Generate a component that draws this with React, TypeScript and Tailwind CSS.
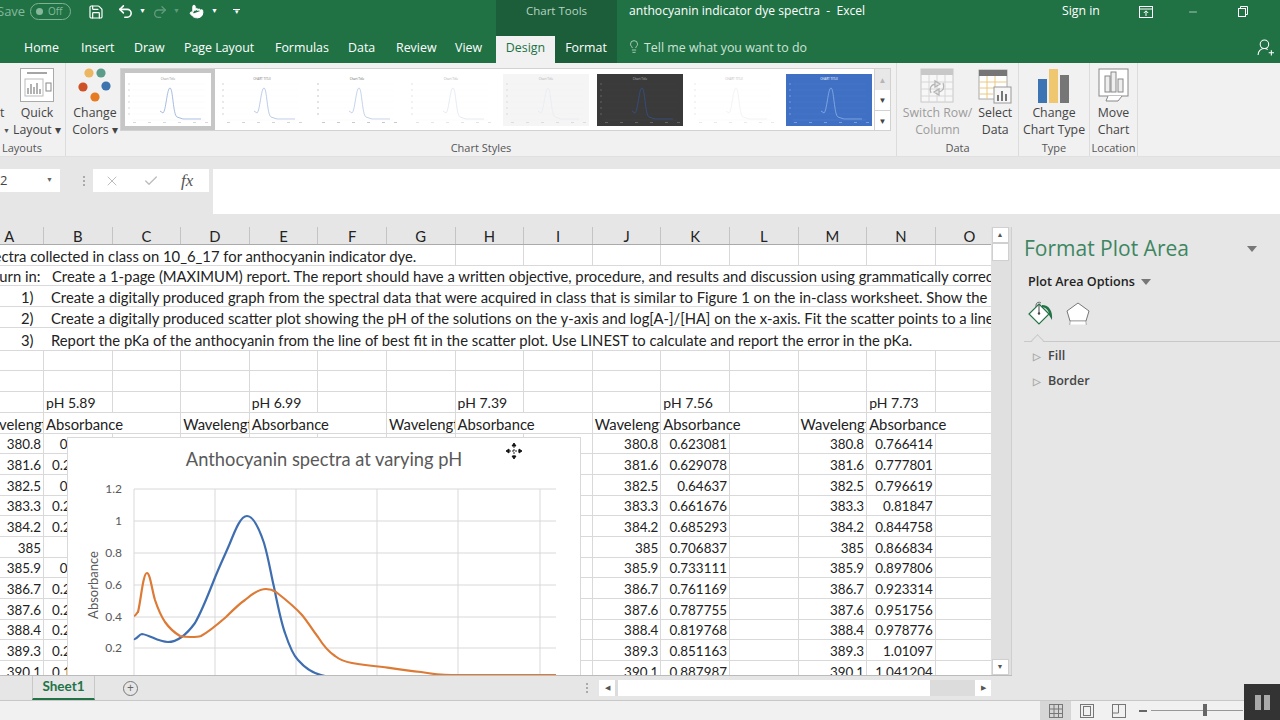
import { Save, Undo2, Redo2, Pointer, Lightbulb, Minus, X, Check } from "lucide-react";

const UI = "font-['Open_Sans',sans-serif]";
const CELL = "font-['Lato',sans-serif] text-[14.8px] text-[#222]";

const TABS = [
  { label: "Home", cls: "w-[70px] pl-[24px]" },
  { label: "Insert", cls: "w-[53px] pl-[11px]" },
  { label: "Draw", cls: "w-[50px] pl-[11px]" },
  { label: "Page Layout", cls: "w-[91px] pl-[11px]" },
  { label: "Formulas", cls: "w-[73px] pl-[11px]" },
  { label: "Data", cls: "w-[48px] pl-[11px]" },
  { label: "Review", cls: "w-[59px] pl-[11px]" },
  { label: "View", cls: "w-[52px] pl-[11px]" },
];

const WAVES = ["380.8", "381.6", "382.5", "383.3", "384.2", "385", "385.9", "386.7", "387.6", "388.4", "389.3", "390.1"];
const B_VALS = ["0.28105", "0.282917", "0.28573", "0.288104", "0.290716", "", "0.29611", "0.298461", "0.250121", "0.252703", "0.255169", "0.157318"];
const K_VALS = ["0.623081", "0.629078", "0.64637", "0.661676", "0.685293", "0.706837", "0.733111", "0.761169", "0.787755", "0.819768", "0.851163", "0.887987"];
const N_VALS = ["0.766414", "0.777801", "0.796619", "0.81847", "0.844758", "0.866834", "0.897806", "0.923314", "0.951756", "0.978776", "1.01097", "1.041204"];
const COLS = ["A", "B", "C", "D", "E", "F", "G", "H", "I", "J", "K", "L", "M", "N", "O"];
const PH = ["pH 5.89", "pH 6.99", "pH 7.39", "pH 7.56", "pH 7.73"];

const PEAK = "M35 37 L38 39 C41 37 42 14 45 14 C48 14 48 41 52 43 L58 45 L76 45";

function Thumb({ bg, line, grid, title, titleFill }: { bg: string; line: string; grid: string; title: string; titleFill: string }) {
  return (
    <svg viewBox="0 0 86 52" className="h-[52px] w-[86px] shrink-0">
      <rect width="86" height="52" fill={bg} />
      {[10, 16, 22, 28, 34, 40].map((y) => (
        <g key={y}>
          <line x1="7" x2="80" y1={y} y2={y} stroke={grid} strokeWidth="0.25" />
          <rect x="3" y={y - 0.4} width="2" height="0.8" fill={titleFill} opacity="0.4" />
        </g>
      ))}
      {[8, 23, 38, 53, 68, 80].map((x) => (
        <rect key={x} x={x} y="48" width="3" height="0.8" fill={titleFill} opacity="0.4" />
      ))}
      <text x="43" y="6" textAnchor="middle" fontSize="3" fill={titleFill}>
        {title}
      </text>
      <path d={PEAK} fill="none" stroke={line} strokeWidth="0.8" />
      <line x1="7" x2="80" y1="46" y2="46" stroke={grid} strokeWidth="0.4" />
    </svg>
  );
}

function GridIcon() {
  return (
    <svg viewBox="0 0 34 34" className="h-[34px] w-[34px]">
      <rect x="0.5" y="0.5" width="33" height="33" fill="#fff" stroke="#aaa" />
      <line x1="7" x2="27" y1="5" y2="5" stroke="#888" strokeWidth="1.5" />
      <rect x="5" y="11" width="18" height="17" fill="none" stroke="#bbb" />
      <path d="M8 26v-6M11 26v-10M14 26v-7M17 26v-11M20 26v-5" stroke="#999" strokeWidth="1.5" />
      <rect x="26" y="15" width="5" height="8" fill="none" stroke="#888" />
    </svg>
  );
}

function ColorsIcon() {
  return (
    <svg viewBox="0 0 34 34" className="h-[34px] w-[34px]">
      <circle cx="11" cy="5" r="4.6" fill="#edb761" />
      <circle cx="23" cy="5" r="4.6" fill="#5c9c8a" />
      <circle cx="5" cy="19" r="4.6" fill="#cf5227" />
      <circle cx="28" cy="18" r="4.6" fill="#3d74ad" />
      <circle cx="17" cy="29" r="4.6" fill="#e67b22" />
    </svg>
  );
}

function SwitchIcon() {
  return (
    <svg viewBox="0 0 34 36" className="h-[36px] w-[34px]">
      <rect x="1" y="1" width="32" height="33" fill="#f7f7f7" stroke="#c8c8c8" />
      <rect x="1" y="1" width="32" height="6" fill="#c8c8c8" />
      <path d="M1 14h32M1 21h32M1 28h32M9 7v27M17 7v27M25 7v27" stroke="#d6d6d6" />
      <path d="M11 25 C9 20 11 17 15 16 M15 13v6l5-3zM23 15c2 5 0 8-4 9M19 21v6l-5-3z" fill="none" stroke="#b5b5b5" strokeWidth="1.3" />
    </svg>
  );
}

function SelectDataIcon() {
  return (
    <svg viewBox="0 0 34 36" className="h-[36px] w-[34px]">
      <rect x="1" y="2" width="28" height="29" fill="#fff" stroke="#aaa" />
      <rect x="1" y="2" width="28" height="6" fill="#767676" />
      <path d="M1 14h28M1 20h28M1 26h14" stroke="#eac87f" />
      <path d="M9 8v23M17 8v23" stroke="#eac87f" />
      <rect x="16" y="19" width="17" height="16" fill="#f7f7f7" stroke="#999" />
      <path d="M20 33v-6M24 33v-10M28 33v-7" stroke="#777" strokeWidth="2" />
    </svg>
  );
}

function ChartTypeIcon() {
  return (
    <svg viewBox="0 0 34 36" className="h-[36px] w-[34px]">
      <rect x="1" y="11" width="9" height="24" fill="#3c74b4" />
      <rect x="12" y="1" width="9" height="34" fill="#efc76f" />
      <rect x="23" y="7" width="9" height="28" fill="#767676" />
    </svg>
  );
}

function MoveChartIcon() {
  return (
    <svg viewBox="0 0 32 36" className="h-[36px] w-[32px]">
      <rect x="1" y="1" width="29" height="27" fill="#fff" stroke="#888" />
      <rect x="7" y="8" width="5" height="16" fill="#eee" stroke="#888" />
      <rect x="13" y="4" width="5" height="20" fill="#eee" stroke="#888" />
      <rect x="20" y="11" width="5" height="13" fill="#eee" stroke="#888" />
      <path d="M10 28 L8 33 H20 L24 28" fill="#fff" stroke="#888" />
    </svg>
  );
}

function RibbonButton({ lines, muted, children }: { lines: string[]; muted?: boolean; children: React.ReactNode }) {
  return (
    <div className="flex flex-col items-center">
      <div className="flex h-[36px] items-start justify-center">{children}</div>
      <div className={`text-center text-[12.3px] leading-[17px] whitespace-nowrap ${muted ? "text-[#9c9c9c]" : "text-[#444]"}`}>
        {lines.map((l) => (
          <div key={l}>{l}</div>
        ))}
      </div>
    </div>
  );
}

function GroupLabel({ children }: { children: React.ReactNode }) {
  return <div className="absolute inset-x-0 bottom-0 text-center text-[11px] leading-[16px] text-[#555]">{children}</div>;
}

function TitleBar() {
  return (
    <div className="flex h-[36px] items-start bg-[#207245] text-white">
      <div className="flex h-[23px] w-[496px] shrink-0 items-center">
        <span className="ml-[-3px] w-[33px] text-[13px] text-[#85b89c]">Save</span>
        <div className="flex h-[17px] w-[41px] items-center gap-[5px] rounded-full border border-[#7fb196] pl-[5px] text-[10px] text-[#85b89c]">
          <span className="h-[7px] w-[7px] rounded-full bg-[#85b89c]" />
          <span>Off</span>
        </div>
        <Save className="ml-[17px] h-[16px] w-[16px]" strokeWidth={1.8} />
        <Undo2 className="ml-[13px] h-[17px] w-[17px]" strokeWidth={2.2} />
        <span className="ml-[5px] text-[7px]">▼</span>
        <Redo2 className="ml-[6px] h-[16px] w-[16px] text-[#619a7c]" strokeWidth={2} />
        <span className="ml-[5px] text-[7px] text-[#619a7c]">▼</span>
        <Pointer className="ml-[9px] h-[17px] w-[15px]" fill="#fff" strokeWidth={1.5} />
        <span className="ml-[7px] text-[7px]">▼</span>
        <span className="ml-[14px] flex w-[10px] flex-col items-center text-[6px] leading-[3px]">
          <span className="h-[1px] w-[7px] bg-white" />
          <span className="mt-[1px]">▼</span>
        </span>
      </div>
      <div className="flex h-full w-[121px] shrink-0 justify-center bg-[#1c5e39] pt-[2px] text-[11.5px] leading-[18px] text-[#b7d4c3]">Chart Tools</div>
      <div className="flex h-[23px] items-center">
        <span className="ml-[12px] w-[236px] shrink-0 whitespace-pre text-[12.1px]">anthocyanin indicator dye spectra  -  Excel</span>
        <span className="ml-[197px] w-[38px] shrink-0 text-[12.3px]">Sign in</span>
        <svg viewBox="0 0 16 14" className="ml-[38px] h-[14px] w-[16px]" fill="none" stroke="#fff">
          <rect x="1.5" y="1.5" width="13" height="11" />
          <path d="M1.5 4h13M8 11V6M5.8 8 8 5.8 10.2 8" />
        </svg>
        <Minus className="ml-[33px] h-[12px] w-[12px]" strokeWidth={1.2} />
        <svg viewBox="0 0 12 13" className="ml-[38px] h-[13px] w-[12px]" fill="none" stroke="#fff">
          <rect x="1.5" y="3.5" width="7" height="8" />
          <path d="M3.5 3.5v-2h7v8h-2" />
        </svg>
      </div>
    </div>
  );
}

function TabBar() {
  return (
    <div className="flex h-[27px] items-stretch bg-[#207245] text-[12.4px] leading-[18px] text-white">
      {TABS.map((t) => (
        <div key={t.label} className={`${t.cls} shrink-0 whitespace-nowrap pt-[3px]`}>
          {t.label}
        </div>
      ))}
      <div className="w-[59px] bg-[#f1f1f1] pt-[3px] text-center text-[#207245]">Design</div>
      <div className="w-[62px] bg-[#1c5e39] pt-[3px] text-center">Format</div>
      <div className="ml-[10px] flex w-[180px] items-start gap-[3px] pt-[3px] text-[#cfe3d7]">
        <Lightbulb className="h-[15px] w-[15px]" strokeWidth={1.3} />
        <span className="whitespace-nowrap">Tell me what you want to do</span>
      </div>
      <svg viewBox="0 0 16 16" className="ml-[450px] mt-[3px] h-[17px] w-[17px]" fill="none" stroke="#fff">
        <circle cx="7" cy="5" r="4" />
        <path d="M1 15c0-4 3-6 6-6 1.5 0 2.5.4 3 1M11 13h5M13.5 10.5v5" />
      </svg>
    </div>
  );
}

function Ribbon() {
  return (
    <div className="flex h-[93px] bg-[#f1f1f1]">
      <div className="relative h-full w-[66px] shrink-0 overflow-hidden border-r border-[#dcdcdc]">
        <span className="absolute left-[-5px] top-[41px] text-[12.3px] leading-[17px] text-[#444]">rt</span>
        <span className="absolute left-[3px] top-[63px] text-[7px] text-[#555]">▼</span>
        <div className="absolute left-[13px] top-[5px]">
          <RibbonButton lines={["Quick", "Layout ▾"]}>
            <GridIcon />
          </RibbonButton>
        </div>
        <div className="absolute bottom-0 left-[2px] text-[11px] leading-[16px] text-[#555]">Layouts</div>
      </div>
      <div className="relative flex h-full w-[831px] shrink-0 border-r border-[#dcdcdc] pt-[5px]">
        <div className="ml-[4px] w-[50px]">
          <RibbonButton lines={["Change", "Colors ▾"]}>
            <ColorsIcon />
          </RibbonButton>
        </div>
        <div className="flex h-[63px] w-[771px] shrink-0 items-center border border-[#d2d2d2] bg-white">
          <div className="flex h-[61px] w-[94px] shrink-0 items-center justify-center border-[4px] border-[#c6c6c6]">
            <Thumb bg="#fff" line="#8fabd8" grid="#eee" title="Chart Title" titleFill="#888" />
          </div>
          <div className="flex gap-[8.4px] pl-[4.4px]">
            <Thumb bg="#fff" line="#a8bfe2" grid="#f2f2f2" title="CHART TITLE" titleFill="#777" />
            <Thumb bg="#fff" line="#b4c8e6" grid="#f2f2f2" title="Chart Title" titleFill="#555" />
            <Thumb bg="#fff" line="#dfe6f0" grid="#f6f6f6" title="Chart Title" titleFill="#aaa" />
            <Thumb bg="#f5f5f5" line="#e6ebf2" grid="#eee" title="Chart Title" titleFill="#aaa" />
            <Thumb bg="#3a3a3a" line="#34528c" grid="#4a4a4a" title="Chart Title" titleFill="#bbb" />
            <Thumb bg="#fff" line="#f0f0f0" grid="#f6f6f6" title="CHART TITLE" titleFill="#bbb" />
            <Thumb bg="#3f70c4" line="#8fb0e6" grid="#5b86d0" title="CHART TITLE" titleFill="#fff" />
          </div>
          <div className="ml-auto flex h-full w-[16px] flex-col border-l border-[#d2d2d2] text-center text-[8px] text-[#444]">
            <div className="flex h-[21px] items-center justify-center bg-[#e8e8e8] text-[#b5b5b5]">▲</div>
            <div className="flex h-[21px] items-center justify-center border-b border-[#d2d2d2]">▼</div>
            <div className="flex h-[19px] items-center justify-center">▼</div>
          </div>
        </div>
        <GroupLabel>Chart Styles</GroupLabel>
      </div>
      <div className="relative flex h-full w-[122px] shrink-0 justify-center gap-[6px] border-r border-[#dcdcdc] pt-[5px]">
        <RibbonButton lines={["Switch Row/", "Column"]} muted>
          <SwitchIcon />
        </RibbonButton>
        <RibbonButton lines={["Select", "Data"]}>
          <SelectDataIcon />
        </RibbonButton>
        <GroupLabel>Data</GroupLabel>
      </div>
      <div className="relative flex h-full w-[71px] shrink-0 justify-center border-r border-[#dcdcdc] pt-[5px]">
        <RibbonButton lines={["Change", "Chart Type"]}>
          <ChartTypeIcon />
        </RibbonButton>
        <GroupLabel>Type</GroupLabel>
      </div>
      <div className="relative flex h-full w-[48px] shrink-0 justify-center border-r border-[#dcdcdc] pt-[5px]">
        <RibbonButton lines={["Move", "Chart"]}>
          <MoveChartIcon />
        </RibbonButton>
        <GroupLabel>Location</GroupLabel>
      </div>
    </div>
  );
}

function FormulaBar() {
  return (
    <div className="flex h-[71px] items-start border-t border-[#e0e0e0] bg-[#e6e6e6] pt-[12px]">
      <div className="flex h-[23px] w-[60px] items-center justify-between bg-white pr-[7px] text-[13px] text-[#444]">
        <span>2</span>
        <span className="text-[7px] text-[#666]">▼</span>
      </div>
      <div className="ml-[15px] flex h-[23px] w-[18px] flex-col items-center justify-center gap-[2px]">
        <span className="h-[2px] w-[2px] bg-[#aaa]" />
        <span className="h-[2px] w-[2px] bg-[#aaa]" />
        <span className="h-[2px] w-[2px] bg-[#aaa]" />
      </div>
      <div className="flex h-[23px] w-[116px] items-center bg-white">
        <X className="ml-[11px] h-[16px] w-[16px] text-[#bdbdbd]" strokeWidth={1.5} />
        <Check className="ml-[23px] h-[16px] w-[16px] text-[#bdbdbd]" strokeWidth={2} />
        <span className="ml-[22px] font-['Liberation_Serif',serif] text-[17px] italic text-[#555]">fx</span>
      </div>
      <div className="ml-[4px] h-[45px] flex-1 bg-white" />
    </div>
  );
}

function ColumnHeaders() {
  return (
    <div className="ml-[-24.6px] flex h-[18px] border-b border-[#aaa] bg-[#e6e6e6]">
      {COLS.map((c) => (
        <div key={c} className={`flex h-full w-[68.6px] shrink-0 items-center justify-center border-r border-[#c4c4c4] pt-[2px] ${CELL}`}>
          {c}
        </div>
      ))}
    </div>
  );
}

function Cell({ text, right, clip, noLine, small }: { text?: string; right?: boolean; clip?: boolean; noLine?: boolean; small?: boolean }) {
  return (
    <div
      className={`flex h-full w-[68.6px] shrink-0 items-center whitespace-nowrap px-[2px] pt-[2px] ${right ? "justify-end text-[13.4px]" : ""} ${small ? "text-[14px]" : ""} ${clip ? "overflow-hidden" : ""} ${noLine ? "" : "border-r border-[#d9d9d9]"}`}
    >
      {text}
    </div>
  );
}

function TextRow({ num, children, tall }: { num?: string; children: React.ReactNode; tall?: boolean }) {
  return (
    <div className={`flex w-[1100px] items-center overflow-hidden whitespace-pre border-b border-[#d9d9d9] pt-[2px] ${tall ? "h-[23px]" : "h-[20.7px]"}`}>
      {num && <span className="ml-[45.6px] w-[30px] shrink-0">{num}</span>}
      {children}
    </div>
  );
}

function EmptyRow() {
  return (
    <div className="flex h-[20.7px] border-b border-[#d9d9d9]">
      {COLS.map((c) => (
        <Cell key={c} />
      ))}
    </div>
  );
}

function Sheet() {
  return (
    <div className={`${CELL} relative h-[430px] overflow-hidden bg-white`}>
      <div className="ml-[-24.6px] w-[1100px]">
        <div className="flex h-[20.7px] border-b border-[#d9d9d9]">
          <div className="flex h-full w-[480.2px] shrink-0 items-center overflow-hidden whitespace-pre border-r border-[#d9d9d9] pl-[2px] pt-[2px]">
            Spectra collected in class on 10_6_17 for anthocyanin indicator dye.
          </div>
          {COLS.slice(7).map((c) => (
            <Cell key={c} />
          ))}
        </div>
        <TextRow>
          <span className="w-[76.6px] shrink-0 pl-[2px]">Return in:</span>
          <span>Create a 1-page (MAXIMUM) report. The report should have a written objective, procedure, and results and discussion using grammatically correct English.</span>
        </TextRow>
        <TextRow num="1)">
          <span>Create a digitally produced graph from the spectral data that were acquired in class that is similar to Figure 1 on the in-class worksheet. Show the</span>
        </TextRow>
        <TextRow num="2)">
          <span>Create a digitally produced scatter plot showing the pH of the solutions on the y-axis and log[A-]/[HA] on the x-axis. Fit the scatter points to a line</span>
        </TextRow>
        <TextRow num="3)" tall>
          <span>Report the pKa of the anthocyanin from the line of best fit in the scatter plot. Use LINEST to calculate and report the error in the pKa.</span>
        </TextRow>
        <EmptyRow />
        <EmptyRow />
        <div className="flex h-[20.7px] border-b border-[#d9d9d9]">
          {COLS.map((c, i) => (
            <Cell key={c} small text={i % 3 === 1 ? PH[(i - 1) / 3] : undefined} />
          ))}
        </div>
        <div className="flex h-[20.7px] border-b border-[#d9d9d9]">
          {COLS.map((c, i) =>
            i % 3 === 0 ? (
              <Cell key={c} text={i === 14 ? undefined : "Wavelength"} clip />
            ) : i % 3 === 1 ? (
              <Cell key={c} text="Absorbance" noLine />
            ) : (
              <Cell key={c} />
            ),
          )}
        </div>
        {WAVES.map((w, r) => (
          <div key={w} className="flex h-[20.7px] border-b border-[#d9d9d9]">
            {COLS.map((c, i) => {
              let text: string | undefined;
              if (i === 0 || i === 9 || i === 12) text = w;
              if (i === 1) text = B_VALS[r];
              if (i === 10) text = K_VALS[r];
              if (i === 13) text = N_VALS[r];
              return <Cell key={c} text={text} right />;
            })}
          </div>
        ))}
      </div>
      <ChartOverlay />
    </div>
  );
}

function ChartOverlay() {
  const labels: [string, number][] = [
    ["1.2", 493],
    ["1", 525],
    ["0.8", 557],
    ["0.6", 589],
    ["0.4", 621],
    ["0.2", 652],
  ];
  return (
    <svg viewBox="67 437 514 238" className="absolute left-[67px] top-[192px] h-[238px] w-[514px]">
      <rect x="67.5" y="437.5" width="513" height="240" fill="#fff" stroke="#d9d9d9" />
      {[489, 521, 553, 585, 617, 648].map((y) => (
        <line key={y} x1="134" x2="556" y1={y} y2={y} stroke="#d9d9d9" strokeWidth="1" />
      ))}
      {[134, 215, 296, 377, 458, 540].map((x) => (
        <line key={x} x1={x} x2={x} y1="489" y2="680" stroke="#d9d9d9" strokeWidth="1" />
      ))}
      <text x="324" y="466" textAnchor="middle" fontSize="18.3" fill="#595959" fontFamily="Lato, sans-serif">
        Anthocyanin spectra at varying pH
      </text>
      {labels.map(([t, y]) => (
        <text key={t} x="122" y={y} textAnchor="end" fontSize="12" fill="#595959" fontFamily="Lato, sans-serif">
          {t}
        </text>
      ))}
      <text transform="translate(98 585) rotate(-90)" textAnchor="middle" fontSize="13" fill="#595959" fontFamily="Lato, sans-serif">
        Absorbance
      </text>
      <path
        d="M134 639 C137 640 139 634 142 634 C150 635 158 642 168 642 C178 642 187 634 195 623 C202 611 208 595 214 580 C220 565 225 555 230 543 C236 528 241 516 247 516 C253 516 259 528 264 543 C269 560 271 575 274 587 C278 607 281 622 285 633 C289 645 293 655 298 660 C305 668 313 673 321 675 L340 680"
        fill="none"
        stroke="#3f6eb0"
        strokeWidth="2.2"
      />
      <path
        d="M134 616 C136 616 137 612 138 612 C141 600 143 573 147 573 C150 573 152 590 155 600 C158 609 161 616 165 622 C170 629 175 633 180 636 C184 637 188 637 191 637 C195 637 198 637 201 636 C210 631 218 624 226 617 C233 610 239 604 245 600 C252 594 259 589 266 589 C270 589 273 590 276 592 C285 599 294 606 302 615 C308 622 313 631 318 637 C323 645 329 652 335 656 C340 660 346 662 352 663 C362 665 372 666 383 667 C396 669 408 671 421 672 C432 674 442 675 452 675 L556 675"
        fill="none"
        stroke="#dd7a35"
        strokeWidth="2.2"
      />
      <g transform="translate(514 451)" fill="#111" stroke="#111" strokeWidth="0.9">
        <path d="M0 -5V5M-5 0H5" fill="none" strokeDasharray="2 1" />
        <path d="M0 -8 L-2 -5 H2Z M0 8 L-2 5 H2Z M-8 0 L-5 -2 V2Z M8 0 L5 -2 V2Z" />
      </g>
    </svg>
  );
}

function VScroll() {
  return (
    <div className="flex h-[448px] w-[21px] shrink-0 flex-col items-center border-r border-[#cfcfcf] bg-[#e0e0e0] pr-[2px]">
      <div className="flex h-[16px] w-[17px] items-center justify-center border border-[#d0d0d0] bg-white text-[7px] text-[#555]">▲</div>
      <div className="h-[18px] w-[17px] border border-[#d0d0d0] bg-white" />
      <div className="flex-1" />
      <div className="flex h-[16px] w-[17px] items-center justify-center border border-[#d0d0d0] bg-white text-[7px] text-[#555]">▼</div>
    </div>
  );
}

function Caret() {
  return <span className="h-0 w-0 border-x-[5.5px] border-t-[6px] border-x-transparent border-t-[#777]" />;
}

function FormatPane() {
  return (
    <div className="h-[473px] flex-1 bg-[#e6e6e6] pl-[12px]">
      <div className="flex h-[42px] items-center justify-between pr-[23px] pt-[1px]">
        <span className="text-[21px] leading-none text-[#3d8661]">Format Plot Area</span>
        <Caret />
      </div>
      <div className="ml-[4px] mt-[3px] flex items-center gap-[6px] text-[12.6px] font-semibold leading-[20px] text-[#222]">
        Plot Area Options <Caret />
      </div>
      <div className="ml-[4px] mt-[9px] flex h-[26px] items-center gap-[11px]">
        <svg viewBox="0 0 26 26" className="h-[26px] w-[26px]" fill="none">
          <path d="M11 3 L21 13 L11 23 L1 13Z" fill="#fff" stroke="#217346" strokeWidth="1.2" />
          <path d="M8 6 V4 a3 3 0 0 1 5 -2" stroke="#666" strokeWidth="1" />
          <path d="M11 4 V12" stroke="#444" strokeWidth="1" />
          <circle cx="11" cy="12.5" r="1.2" fill="#444" />
          <path d="M14 4 C21 4 25 10 24 19 L21 14 C21 10 19 7 14 6Z" fill="#217346" />
        </svg>
        <svg viewBox="0 0 26 26" className="h-[26px] w-[26px]" fill="none">
          <path d="M13 2 L24 10 L21 20 H5 L2 10Z" fill="#fff" stroke="#777" />
          <path d="M5 20 L4.5 24 M21 20 L21.500 24" stroke="#bbb" />
          <rect x="6" y="20.500" width="14" height="3" fill="#fff" />
        </svg>
      </div>
      <div className="relative mt-[14px] h-[1px] bg-[#c8c8c8]">
        <span className="absolute left-[9px] top-[-5px] h-[9px] w-[9px] rotate-45 border-l border-t border-[#c8c8c8] bg-[#e6e6e6]" />
      </div>
      <div className="ml-[9px] mt-[2px] flex h-[25px] items-center gap-[7px] text-[12.5px] font-semibold text-[#444]">
        <span className="text-[10px] text-[#aaa]">▷</span> Fill
      </div>
      <div className="ml-[9px] flex h-[25px] items-center gap-[7px] text-[12.5px] font-semibold text-[#444]">
        <span className="text-[10px] text-[#aaa]">▷</span> Border
      </div>
    </div>
  );
}

function SheetTabs() {
  return (
    <div className="flex h-[25px] w-[1012px] items-center border-t border-[#bbb] bg-[#e6e6e6]">
      <div className="ml-[32px] flex h-[24px] w-[63px] items-center justify-center border-x border-b-2 border-[#c8c8c8] border-b-[#217346] pb-[2px] font-['Lato',sans-serif] text-[13.5px] font-bold text-[#217346]">
        Sheet1
      </div>
      <div className="ml-[28px] flex h-[15px] w-[15px] items-center justify-center rounded-full border border-[#777] text-[12px] leading-none text-[#666]">+</div>
      <div className="ml-[448px] flex flex-col gap-[2px]">
        <span className="h-[2px] w-[2px] bg-[#aaa]" />
        <span className="h-[2px] w-[2px] bg-[#aaa]" />
        <span className="h-[2px] w-[2px] bg-[#aaa]" />
      </div>
      <div className="ml-[11px] flex h-[16px] w-[392px] items-center bg-[#dcdcdc]">
        <div className="flex h-full w-[16px] items-center justify-center bg-white text-[7px] text-[#555]">◀</div>
        <div className="ml-[3px] h-full w-[312px] bg-white" />
        <div className="ml-auto flex h-full w-[16px] items-center justify-center bg-white text-[7px] text-[#555]">▶</div>
      </div>
    </div>
  );
}

function StatusBar() {
  return (
    <div className="flex h-[20px] items-center border-t border-[#c8c8c8] bg-[#f1f1f1]">
      <div className="ml-[1040px] flex h-full w-[31px] items-center justify-center bg-[#d6d6d6]">
        <svg viewBox="0 0 14 14" className="h-[14px] w-[14px]" fill="none" stroke="#777">
          <rect x="0.5" y="0.5" width="13" height="13" />
          <path d="M0.5 5h13M0.5 9.5h13M5 0.5v13M9.5 0.5v13" />
        </svg>
      </div>
      <svg viewBox="0 0 14 14" className="ml-[9px] h-[14px] w-[14px]" fill="none" stroke="#777">
        <rect x="0.5" y="0.5" width="13" height="13" />
        <rect x="3.5" y="2.5" width="7" height="9" />
      </svg>
      <svg viewBox="0 0 14 14" className="ml-[18px] h-[14px] w-[14px]" fill="none" stroke="#777">
        <rect x="0.5" y="0.5" width="13" height="13" />
        <path d="M0.5 9h6V0.5M6.5 9V0.5" />
      </svg>
      <span className="ml-[13px] h-[2px] w-[8px] bg-[#666]" />
      <div className="relative ml-[4px] h-[1px] w-[92px] bg-[#999]">
        <span className="absolute left-[52px] top-[-6px] h-[12px] w-[4px] bg-[#666]" />
      </div>
    </div>
  );
}

export default function App() {
  return (
    <div className={`${UI} relative h-[720px] w-[1280px] overflow-hidden bg-[#e6e6e6]`}>
      <TitleBar />
      <TabBar />
      <Ribbon />
      <FormulaBar />
      <div className="flex">
        <div className="w-[1012px] shrink-0">
          <div className="flex">
            <div className="w-[991px] shrink-0 overflow-hidden">
              <ColumnHeaders />
              <Sheet />
            </div>
            <VScroll />
          </div>
          <SheetTabs />
        </div>
        <FormatPane />
      </div>
      <StatusBar />
      <div className="absolute bottom-0 right-0 flex h-[36px] w-[36px] items-center justify-center gap-[3px] bg-[#333]">
        <span className="h-[15px] w-[6px] bg-[#aaa]" />
        <span className="h-[15px] w-[6px] bg-[#aaa]" />
      </div>
    </div>
  );
}
